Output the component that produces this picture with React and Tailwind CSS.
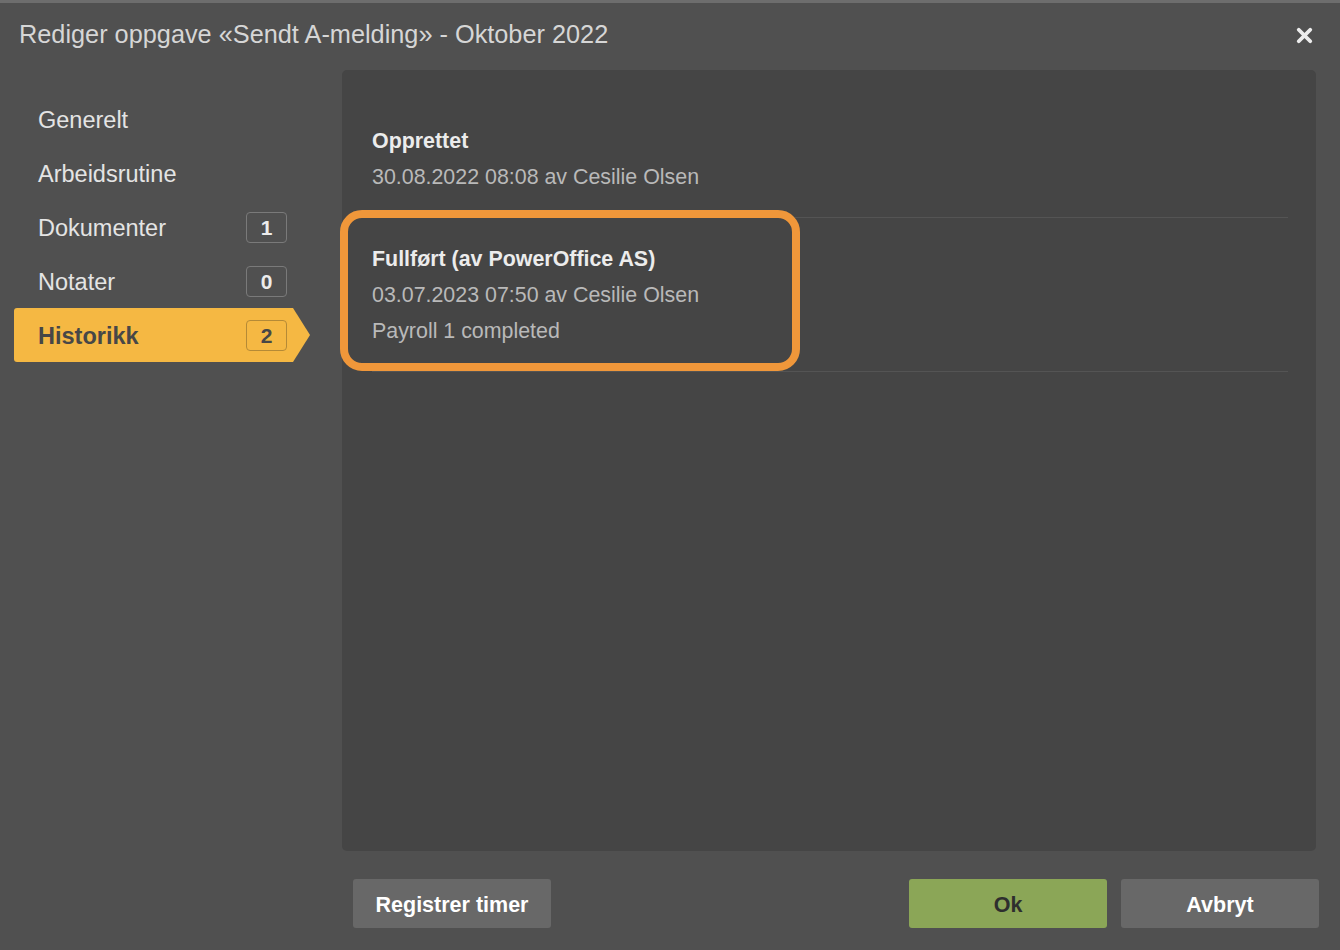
import { X } from 'lucide-react';

const navItems = [
  { label: 'Generelt' },
  { label: 'Arbeidsrutine' },
  { label: 'Dokumenter', count: 1 },
  { label: 'Notater', count: 0 },
  { label: 'Historikk', count: 2, active: true },
];

const history = [
  { title: 'Opprettet', lines: ['30.08.2022 08:08 av Cesilie Olsen'] },
  {
    title: 'Fullført (av PowerOffice AS)',
    lines: ['03.07.2023 07:50 av Cesilie Olsen', 'Payroll 1 completed'],
  },
];

const NavItem = ({ label, count, active }) => (
  <div
    className={`flex items-center h-[54px] pl-[24px] w-[296px] ${
      active
        ? 'bg-[#f5b843] text-[#474747] font-bold rounded-l-[3px] [clip-path:polygon(0_0,279px_0,100%_50%,279px_100%,0_100%)]'
        : 'text-[#e4e4e4]'
    }`}
  >
    <span className="text-[23.5px] flex-1 pt-[3px]">{label}</span>
    {count !== undefined && (
      <span
        className={`mr-[23px] w-[41px] h-[31px] flex items-center justify-center rounded-[4px] border text-[21px] font-bold ${
          active ? 'border-[#b58a36] text-[#474747]' : 'border-[#7a7a7a] text-[#ececec]'
        }`}
      >
        <span className="pt-[2px]">{count}</span>
      </span>
    )}
  </div>
);

export default function App() {
  return (
    <div
      className="w-[1340px] h-[950px] bg-[#505050] border-t-[3px] border-[#6d6d6d] flex flex-col"
      style={{ fontFamily: '"Liberation Sans", Arial, sans-serif' }}
    >
      {/* Header */}
      <div className="h-[67px] flex items-center justify-between pl-[19px] pr-[24px]">
        <h1 className="text-[25.3px] text-[#d6d6d6] -mt-[4px]">
          Rediger oppgave «Sendt A-melding» - Oktober 2022
        </h1>
        <X className="w-[23px] h-[23px] text-[#ececec] -mt-[2px]" strokeWidth={4} />
      </div>

      {/* Body */}
      <div className="flex h-[781px]">
        <div className="w-[342px] pt-[22px] pl-[14px] flex flex-col">
          {navItems.map((item) => (
            <NavItem key={item.label} {...item} />
          ))}
        </div>

        <div className="relative flex-1 mr-[24px] bg-[#454545] rounded-[5px] pt-[30px] pl-[30px] pr-[28px]">
          {history.map((entry) => (
            <div key={entry.title} className="pt-[23px] pb-[22px] border-b border-[#545454]">
              <div className="h-[36px] flex items-center text-[21.4px] font-bold text-[#ececec]">
                {entry.title}
              </div>
              {entry.lines.map((line) => (
                <div key={line} className="h-[36px] flex items-center text-[21.4px] text-[#b9b9b9]">
                  {line}
                </div>
              ))}
            </div>
          ))}

          {/* highlight */}
          <div className="absolute left-[-2px] top-[140px] w-[460px] h-[161px] border-[8px] border-[#f0973a] rounded-[22px]" />
        </div>
      </div>

      {/* Footer */}
      <div className="flex items-center pt-[28px] pl-[353px] pr-[21px]">
        <button className="w-[198px] h-[49px] pt-[4px] rounded-[3px] bg-[#686868] text-white text-[21.5px] font-bold">
          Registrer timer
        </button>
        <div className="flex-1" />
        <button className="w-[198px] h-[49px] pt-[4px] rounded-[3px] bg-[#8ba657] text-[#2e2e2e] text-[21.5px] font-bold">
          Ok
        </button>
        <button className="ml-[14px] w-[198px] h-[49px] pt-[4px] rounded-[3px] bg-[#686868] text-white text-[21.5px] font-bold">
          Avbryt
        </button>
      </div>
    </div>
  );
}
